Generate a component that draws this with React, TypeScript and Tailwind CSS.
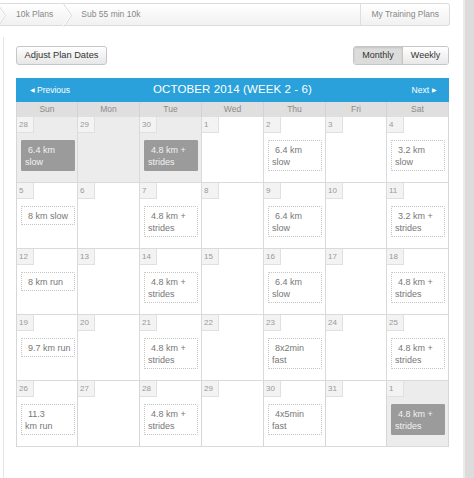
import React from "react";

type Cell = { d: number; w?: string; grayCell?: boolean; past?: boolean };

const rows: Cell[][] = [
  [
    { d: 28, grayCell: true, past: true, w: "6.4 km slow" },
    { d: 29, grayCell: true },
    { d: 30, grayCell: true, past: true, w: "4.8 km + strides" },
    { d: 1 },
    { d: 2, w: "6.4 km slow" },
    { d: 3 },
    { d: 4, w: "3.2 km slow" },
  ],
  [
    { d: 5, w: "8 km slow" },
    { d: 6 },
    { d: 7, w: "4.8 km + strides" },
    { d: 8 },
    { d: 9, w: "6.4 km slow" },
    { d: 10 },
    { d: 11, w: "3.2 km + strides" },
  ],
  [
    { d: 12, w: "8 km run" },
    { d: 13 },
    { d: 14, w: "4.8 km + strides" },
    { d: 15 },
    { d: 16, w: "6.4 km slow" },
    { d: 17 },
    { d: 18, w: "4.8 km + strides" },
  ],
  [
    { d: 19, w: "9.7 km run" },
    { d: 20 },
    { d: 21, w: "4.8 km + strides" },
    { d: 22 },
    { d: 23, w: "8x2min fast" },
    { d: 24 },
    { d: 25, w: "4.8 km + strides" },
  ],
  [
    { d: 26, w: "11.3 km\u00a0run" },
    { d: 27 },
    { d: 28, w: "4.8 km + strides" },
    { d: 29 },
    { d: 30, w: "4x5min fast" },
    { d: 31 },
    { d: 1, grayCell: true, past: true, w: "4.8 km + strides" },
  ],
];

const days = ["Sun", "Mon", "Tue", "Wed", "Thu", "Fri", "Sat"];

function Chevron() {
  return (
    <svg width="9" height="23" viewBox="0 0 9 23" className="shrink-0">
      <polyline points="0.5,0 8.5,11.5 0.5,23" fill="none" stroke="#d6d6d6" strokeWidth="1" />
      <polyline points="-0.5,0 7.5,11.5 -0.5,23" fill="none" stroke="#ffffff" strokeWidth="1" />
    </svg>
  );
}

function DayCell({ c, col, last }: { c: Cell; col: number; last: boolean }) {
  return (
    <div
      className={
        (c.grayCell ? "bg-[#ececec] " : "bg-white ") +
        (col < 6 ? "border-r border-[#d6d6d6] " : "") +
        (last ? "h-[65px] " : "h-[66px] border-b border-[#dadada] ") +
        "flex flex-col"
      }
    >
      <div className="w-[17px] h-[16px] bg-[#f3f3f3] border-r border-b border-[#e0e0e0] pl-[2px] text-[8px] leading-[15px] text-[#999]">
        {c.d}
      </div>
      {c.w && (
        <div
          className={
            "mt-[7px] ml-[4px] w-[54px] pl-[3px] pr-[2px] pt-[3px] pb-[2px] text-[9px] leading-[12px] indent-[3px] rounded-[1px] " +
            (c.past
              ? "bg-[#9b9b9b] border border-[#9b9b9b] text-[#f2f2f2]"
              : "bg-white border border-dotted border-[#c4c4c4] text-[#777]")
          }
        >
          {c.w}
        </div>
      )}
    </div>
  );
}

export default function App() {
  return (
    <div className="w-[474px] h-[478px] flex bg-white overflow-hidden font-['Liberation_Sans',Arial,sans-serif]">
      <div className="w-[463px] flex flex-col">
        {/* breadcrumb */}
        <div className="mt-[3px] w-[450px] h-[23px] flex items-center border-y border-r border-[#dcdcdc] rounded-r-[3px] bg-gradient-to-b from-white to-[#f1f1f1] text-[8.5px] text-[#888]">
          <div className="w-[6px] h-full overflow-hidden flex justify-end">
            <Chevron />
          </div>
          <span className="ml-[10px]">10k Plans</span>
          <div className="ml-[10px] h-full">
            <Chevron />
          </div>
          <span className="ml-[9px]">Sub 55 min 10k</span>
          <div className="flex-1" />
          <div className="h-full flex items-center border-l border-[#dedede] pl-[10px] pr-[10px]">
            My Training Plans
          </div>
        </div>

        {/* content container */}
        <div className="mt-[11px] ml-[3px] flex-1 border-l border-[#e6e6e6] pl-[12px] pt-[9px]">
          <div className="w-[433px] flex justify-between">
            <button className="h-[19px] w-[91px] rounded-[3px] border border-[#c6c6c6] bg-gradient-to-b from-white to-[#e6e6e6] text-[9.3px] text-[#333] flex items-center justify-center">
              Adjust Plan Dates
            </button>
            <div className="h-[19px] flex rounded-[3px] border border-[#c6c6c6] overflow-hidden text-[9px] text-[#333]">
              <div className="w-[49px] flex items-center justify-center bg-[#dcdcdc] shadow-[inset_0_1px_2px_rgba(0,0,0,0.12)] border-r border-[#c6c6c6]">
                Monthly
              </div>
              <div className="w-[45px] flex items-center justify-center bg-gradient-to-b from-white to-[#e8e8e8]">
                Weekly
              </div>
            </div>
          </div>

          {/* calendar */}
          <div className="mt-[13px] w-[433px]">
            <div className="h-[24px] bg-[#2aa1da] flex items-center text-white">
              <div className="w-[110px] pl-[14px] text-[8.5px] flex items-center gap-[2px]">
                <span className="text-[6px]">◀</span>
                <span>Previous</span>
              </div>
              <div className="flex-1 text-center text-[11.5px] tracking-[0.1px]">OCTOBER 2014 (WEEK 2 - 6)</div>
              <div className="w-[110px] pr-[12px] text-[8.5px] flex items-center justify-end gap-[3px]">
                <span>Next</span>
                <span className="text-[6px]">▶</span>
              </div>
            </div>
            <div className="border-x border-[#d6d6d6]">
              <div className="grid grid-cols-[61px_62px_62px_62px_62px_61px_61px] h-[15px] bg-[#dfdfdf] text-[8.5px] text-[#8a8a8a]">
                {days.map((d, i) => (
                  <div
                    key={d}
                    className={"flex items-center justify-center " + (i < 6 ? "border-r border-[#d2d2d2]" : "")}
                  >
                    {d}
                  </div>
                ))}
              </div>
              {rows.map((r, ri) => (
                <div
                  key={ri}
                  className={
                    "grid grid-cols-[61px_62px_62px_62px_62px_61px_61px] " +
                    (ri === rows.length - 1 ? "border-b border-[#dadada]" : "")
                  }
                >
                  {r.map((c, ci) => (
                    <DayCell key={ci} c={c} col={ci} last={ri === rows.length - 1} />
                  ))}
                </div>
              ))}
            </div>
          </div>
        </div>
      </div>
      <div className="w-[11px] h-full bg-[#dcdcdc] border-l-[2px] border-[#ebebeb]" />
    </div>
  );
}
